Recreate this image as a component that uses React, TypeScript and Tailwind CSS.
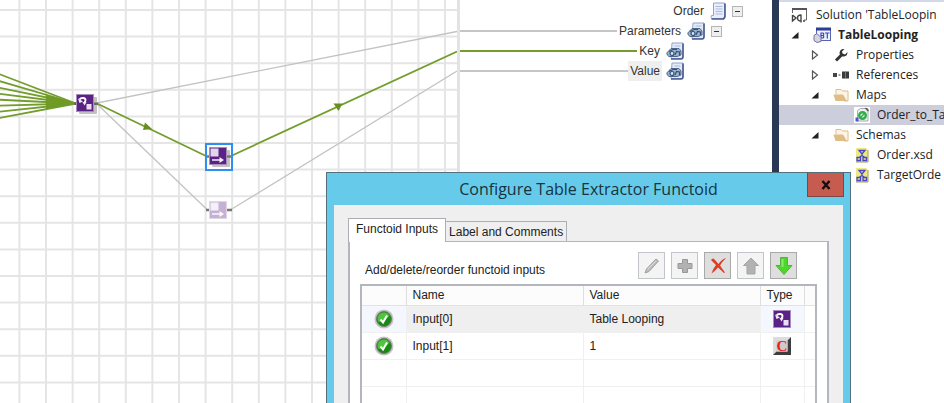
import type { ReactNode } from "react";

const GRID = 26.6;
const gridColumns = Array.from({ length: 60 }, (_, i) => 19.4 + i * GRID);
const gridRows = Array.from({ length: 40 }, (_, i) => 10 + i * GRID);
const incomingLinks = [74, 81, 87.7, 93.7, 99.7, 105.7, 111.7, 118];

function LoopingGlyph() {
  return (
    <>
      <rect width="18" height="18" fill="#5b2285" />
      <rect x="0.5" y="0.5" width="17" height="17" fill="none" stroke="#a78bbd" />
      <path
        d="M3.5 5.500Q5 3.500 7.500 4q2.500.7 1.800 3-.6 1.800-1.300 2.500"
        fill="none"
        stroke="#fff"
        strokeWidth="2"
      />
      <path d="M2 4.500l1.500 4.500 3.500-1.500zM6.500 8h4l-2 3.500z" fill="#f3ecf8" />
      <rect x="10.500" y="10" width="5" height="5.500" fill="#e9def2" />
    </>
  );
}

function ExtractorGlyph() {
  return (
    <>
      <rect width="18" height="18" fill="#5b2285" />
      <rect x="0.5" y="0.5" width="17" height="17" fill="none" stroke="#a78bbd" />
      <rect x="1.500" y="1.500" width="8" height="8" fill="#e2d6ec" />
      <path d="M3 12.200h7.500V10l4.500 3-4.500 3v-2.200H3z" fill="#f4eef8" />
    </>
  );
}

function MapCanvas() {
  return (
    <main className="min-w-0 flex-1 border-r-[3px] border-[#e3e3e3] bg-white">
      <svg className="block h-full w-full" role="img" aria-label="Map grid">
        <g stroke="#e5e5e5" strokeWidth="2">
          {gridColumns.map((x) => (
            <line key={x} x1={x} x2={x} y1="0" y2="100%" />
          ))}
          {gridRows.map((y) => (
            <line key={y} x1="0" x2="100%" y1={y} y2={y} />
          ))}
        </g>

        <g stroke="#c3c3c3" strokeWidth="1.300" fill="none">
          <path d="M97 103L457 31.500" />
          <path d="M97 104L207 209.500" />
          <path d="M231 209.500L457 71" />
        </g>

        <g stroke="#739d2c" strokeWidth="1.800" fill="none">
          {incomingLinks.map((y) => (
            <path key={y} d={`M-1 ${y}L76 103.500`} />
          ))}
          <path d="M96 103L206 156" />
          <path d="M231 156L457 51.500" />
        </g>
        <path d="M46 95L76 103.500L46 109z" fill="#6f9a25" />
        <path d="M145 122.500l7 6.500l-9 1z" fill="#668f1e" />
        <path d="M333.500 103.500l9 0l-4 7.500z" fill="#668f1e" />

        <rect x="79" y="97" width="18" height="17" rx="1" fill="#c4c0bd" />
        <rect x="74.500" y="102.500" width="3" height="2.500" fill="#5a5a5a" />
        <rect x="94" y="102.500" width="4" height="2.500" fill="#6a6a6a" />
        <g transform="translate(76 94)">
          <LoopingGlyph />
        </g>

        <rect x="206" y="144" width="26" height="26" fill="#fff" stroke="#2e8ff0" strokeWidth="2" />
        <rect x="212" y="150" width="18" height="17" rx="1" fill="#c4c0bd" />
        <path d="M207 156.500h3M227 156.500h4" stroke="#777" strokeWidth="2.500" />
        <g transform="translate(209 147)">
          <ExtractorGlyph />
        </g>

        <path d="M206 210h4M227 210h5" stroke="#777" strokeWidth="2.500" />
        <rect x="209" y="201" width="18" height="18" fill="#fff" />
        <g transform="translate(209 201)" opacity="0.350">
          <ExtractorGlyph />
        </g>
      </svg>
    </main>
  );
}

function RecordIcon() {
  return (
    <svg viewBox="0 0 16 18" className="h-[18px] w-4 shrink-0" aria-hidden="true">
      <path d="M3.500 1h11v13q0 2.500-2 2.500H1.500q-1-1 0-3h2z" fill="#e9effa" stroke="#93a3c9" />
      <path d="M15 1.500v13q-.5 2.500-2.500 2.500H1.500" fill="none" stroke="#4b5a92" strokeWidth="1.600" />
      <path d="M5.500 4.500h7M5.500 7h7M5.500 9.500h7M5.500 12h7" stroke="#a9bade" />
    </svg>
  );
}

function FieldIcon() {
  return (
    <svg viewBox="0 0 18 18" className="size-[18px] shrink-0" aria-hidden="true">
      <path d="M6 1h11v14q-1 2-3 1.500H5z" fill="#e3ebf8" stroke="#93a3c9" />
      <path d="M17 1.500v13q0 2.500-2 2.500H5" fill="none" stroke="#4b5a92" strokeWidth="1.600" />
      <path d="M8.500 4h6" stroke="#a9bade" />
      <path d="M.8 11L5 6.500h8l2 2.500v4l-4 1.500H3q-2.200-1-2.200-3.500z" fill="#9db4cb" stroke="#4d668c" />
      <circle cx="6" cy="11.500" r="2" fill="#d7e6f2" stroke="#34507a" strokeWidth="1.200" />
      <path d="M9 13l1.500-3.500 3 .5v3M3 9.500L7 7.500h4" fill="none" stroke="#34507a" strokeWidth="1.200" />
    </svg>
  );
}

function CollapseButton({ label }: { label: string }) {
  return (
    <button
      aria-label={`Collapse ${label}`}
      className="flex size-[11px] shrink-0 items-center justify-center border border-[#b5b5b5] bg-[#efefef]"
    >
      <span className="h-px w-[5px] bg-[#333]" />
    </button>
  );
}

type SchemaRowProps = {
  label: string;
  indent: string;
  line?: string;
  highlighted?: boolean;
  record?: boolean;
  collapsible?: boolean;
};

const schemaRows: SchemaRowProps[] = [
  { label: "Order", indent: "pr-[29px]", record: true, collapsible: true },
  { label: "Parameters", indent: "pr-[50px]", line: "bg-[#c6c6c6]", collapsible: true },
  { label: "Key", indent: "pr-[88px]", line: "bg-[#739d2c]" },
  { label: "Value", indent: "pr-[88px]", line: "bg-[#c6c6c6]", highlighted: true },
];

function SchemaRow({ label, indent, line, highlighted, record, collapsible }: SchemaRowProps) {
  return (
    <li className={`flex h-5 items-center ${indent}`}>
      <span className={`h-[2px] flex-1 ${line ?? ""}`} />
      <span className={`px-[2px] leading-5 ${highlighted ? "bg-[#efefef]" : ""}`}>{label}</span>
      <span className="ml-1 flex items-center gap-[6px]">
        {record ? <RecordIcon /> : <FieldIcon />}
        {collapsible && <CollapseButton label={label} />}
      </span>
    </li>
  );
}

function SchemaTree() {
  return (
    <section className="w-[312px] shrink-0 bg-white pt-px font-['Liberation_Sans',Arial,sans-serif] text-[12px] text-[#333]">
      <ul>
        {schemaRows.map((row) => (
          <SchemaRow key={row.label} {...row} />
        ))}
      </ul>
    </section>
  );
}

function SolutionIcon() {
  return (
    <svg viewBox="0 0 18 16" className="h-4 w-[18px]" aria-hidden="true">
      <path d="M1.500 6V2.500h14V13H13" fill="none" stroke="#666" />
      <path d="M1 2h15" stroke="#555" strokeWidth="2" />
      <path d="M1.500 8v6l3.500-3-3.500-3M10 8q-3.500 0-3.500 3T10 14M10 7.500V15.500" fill="none" stroke="#444" strokeWidth="1.400" />
      <path d="M12 14h2" stroke="#444" strokeWidth="1.500" />
    </svg>
  );
}

function ProjectIcon() {
  return (
    <svg viewBox="0 0 18 16" className="h-4 w-[18px]" aria-hidden="true">
      <rect x="3.500" y="1.500" width="14" height="12" fill="#f0f2fb" stroke="#5a63b0" />
      <path d="M3 2h15" stroke="#2f3c96" strokeWidth="3" />
      <path d="M8 6v5h2q1.500-1.200 0-2.500H8h2Q11.500 7 10 6zM12 6h4.500M14.300 6v5.500" fill="none" stroke="#3549b8" strokeWidth="1.200" />
      <path d="M1 8.500l3-2 4 4v4l-4 1-3-2z" fill="#d5d3e6" stroke="#77719c" />
    </svg>
  );
}

function WrenchIcon() {
  return (
    <svg viewBox="0 0 16 16" className="size-4" aria-hidden="true">
      <path d="M3 13.500L9 7.500" stroke="#333" strokeWidth="3" />
      <path d="M11.500 2Q7 1.500 6.500 6q.5 4 4.500 3.500 3.500-.5 3.500-4.500L12 7.500 9.500 6.500 9 4.500z" fill="#333" />
    </svg>
  );
}

function ReferencesIcon() {
  return (
    <svg viewBox="0 0 16 16" className="size-4" aria-hidden="true">
      <rect y="6" width="4" height="4" fill="#444" />
      <path d="M5.500 8h2" stroke="#777" strokeWidth="1.500" />
      <rect x="9" y="4.500" width="7" height="7" fill="#3a3a3a" />
      <path d="M12.500 4.500v7" stroke="#888" strokeWidth=".8" />
    </svg>
  );
}

function FolderIcon() {
  return (
    <svg viewBox="0 0 16 16" className="size-4" aria-hidden="true">
      <path d="M3 7V2.500h5l1.500 1.500h5.500v10h-4" fill="#fdf4e6" stroke="#e0bd87" />
      <path d="M.5 7.500h9.500L14 14H2.500z" fill="#e0bd87" />
    </svg>
  );
}

function MapFileIcon() {
  return (
    <svg viewBox="0 0 16 16" className="size-4 bg-white" aria-hidden="true">
      <path d="M3.500 3.500l3-2h7.500v12.500H3.500z" fill="#eef1f4" stroke="#aaa" />
      <circle cx="8.500" cy="8.500" r="3.300" fill="none" stroke="#2fae49" strokeWidth="2.400" />
      <path d="M6 11L11 6" stroke="#2fae49" strokeWidth="1.500" />
      <path d="M1.500 10.500h3v4h-3z" fill="#4a56cf" />
      <path d="M11.500 1l3 3" stroke="#555" strokeWidth="1.500" />
    </svg>
  );
}

function SchemaFileIcon() {
  return (
    <svg viewBox="0 0 16 16" className="size-4" aria-hidden="true">
      <path d="M2 1h10l2 2v12H2z" fill="#f1e77c" />
      <path d="M14 3v12H2" fill="none" stroke="#a59c4b" />
      <path d="M5 3.500h6L8 7zM3 10.500h3.500v3H3zM9 10.500h3.500v3H9zM8 6.500v3M5 10.500L8 8.500l3 2" fill="none" stroke="#4148cf" strokeWidth="1.300" />
    </svg>
  );
}

type ExplorerRow = {
  label: string;
  indent: string;
  icon: ReactNode;
  expander?: "open" | "closed";
  bold?: boolean;
  selected?: boolean;
};

const explorerRows: ExplorerRow[] = [
  { label: "Solution 'TableLoopin", indent: "pl-3", icon: <SolutionIcon /> },
  { label: "TableLooping", indent: "pl-3", icon: <ProjectIcon />, expander: "open", bold: true },
  { label: "Properties", indent: "pl-8", icon: <WrenchIcon />, expander: "closed" },
  { label: "References", indent: "pl-8", icon: <ReferencesIcon />, expander: "closed" },
  { label: "Maps", indent: "pl-8", icon: <FolderIcon />, expander: "open" },
  { label: "Order_to_Ta", indent: "pl-[75px]", icon: <MapFileIcon />, selected: true },
  { label: "Schemas", indent: "pl-8", icon: <FolderIcon />, expander: "open" },
  { label: "Order.xsd", indent: "pl-[75px]", icon: <SchemaFileIcon /> },
  { label: "TargetOrde", indent: "pl-[75px]", icon: <SchemaFileIcon /> },
];

function Expander({ label, open }: { label: string; open: boolean }) {
  return (
    <button aria-label={`Toggle ${label}`} aria-expanded={open} className="mr-[14px] w-2 shrink-0">
      <svg viewBox="0 0 8 10" className="h-[10px] w-2" aria-hidden="true">
        {open ? (
          <path d="M7.500 2v6.500H0.500z" fill="#222" />
        ) : (
          <path d="M1.500 1l5 4-5 4z" fill="#fff" stroke="#555" strokeWidth="1.200" />
        )}
      </svg>
    </button>
  );
}

function SolutionExplorer() {
  return (
    <aside className="w-[172px] shrink-0 overflow-hidden border-l-[7px] border-[#293955] bg-white font-['Open_Sans','Noto_Sans',sans-serif] text-[12px] text-[#222]">
      <div className="mb-[3px] h-[2px] bg-[#d3d9e8]" />
      <ul>
        {explorerRows.map((row) => (
          <li
            key={row.label}
            className={`flex h-5 items-center whitespace-nowrap ${row.indent} ${row.selected ? "bg-[#cccedb]" : ""}`}
          >
            {row.expander && <Expander label={row.label} open={row.expander === "open"} />}
            <span className="mr-[7px] shrink-0">{row.icon}</span>
            <span className={row.bold ? "font-bold" : ""}>{row.label}</span>
          </li>
        ))}
      </ul>
    </aside>
  );
}

type ToolButtonProps = {
  label: string;
  enabled?: boolean;
  children: ReactNode;
};

function ToolButton({ label, enabled, children }: ToolButtonProps) {
  return (
    <button
      aria-label={label}
      disabled={!enabled}
      className={`flex size-[27px] items-center justify-center border ${
        enabled ? "border-[#a9a9a9] bg-[#dedede]" : "border-[#c2c5c9] bg-[#f4f4f4]"
      }`}
    >
      <svg viewBox="0 0 20 20" className="size-5" aria-hidden="true">
        {children}
      </svg>
    </button>
  );
}

function Toolbar() {
  return (
    <div className="flex gap-[6px]">
      <ToolButton label="Edit input">
        <path d="M3 17l1.500-4L14 3l2.500 2L7 15.500z" fill="#bcbcbc" stroke="#a2a2a2" />
        <path d="M5.500 13.500L14 5" stroke="#dedede" />
      </ToolButton>
      <ToolButton label="Add input">
        <path d="M7.500 3.500h5v4H17v5h-4.500v4h-5v-4H3v-5h4.500z" fill="#b2b2b2" stroke="#989898" strokeLinejoin="round" />
      </ToolButton>
      <ToolButton label="Delete input" enabled>
        <path d="M3 4q2-3 4 0l3.500 4Q14 3 18 2q-4 4-6 7.500l5 7-1 .5-6-5.500Q6 16 3.500 17.500 5 12.500 8 9z" fill="#df3c24" />
      </ToolButton>
      <ToolButton label="Move input up">
        <path d="M10 2L17.500 9.500H14v8.500H6V9.500H2.500z" fill="#b2b2b2" stroke="#a5a5a5" strokeLinejoin="round" />
      </ToolButton>
      <ToolButton label="Move input down" enabled>
        <path d="M6.500 1.500h7v8h4.500L10 18.500 2 9.500h4.500z" fill="#4fd62c" stroke="#56b03e" strokeLinejoin="round" />
        <path d="M8.500 3v8" stroke="#86ef63" strokeWidth="2" />
      </ToolButton>
    </div>
  );
}

function ValidIcon() {
  return (
    <svg viewBox="0 0 20 20" className="mx-auto size-5" role="img" aria-label="Valid">
      <circle cx="10" cy="10" r="9.500" fill="#c2c2c2" />
      <circle cx="10" cy="10" r="7.500" fill="#188a14" stroke="#777" />
      <path d="M3.500 10a6.500 6.500 0 0 1 12-3.500Q12 12 4.500 13z" fill="#4fc43c" />
      <path d="M6.500 10.500l2.500 3 4-7" fill="none" stroke="#fff" strokeWidth="2" />
    </svg>
  );
}

function LoopingIcon() {
  return (
    <svg viewBox="0 0 18 18" className="mx-auto size-[18px]" role="img" aria-label="Functoid">
      <LoopingGlyph />
    </svg>
  );
}

function ConstantIcon() {
  return (
    <svg viewBox="0 0 18 18" className="mx-auto size-[18px]" role="img" aria-label="Constant">
      <rect width="18" height="18" fill="#dcdcdc" />
      <path d="M18 0v18H0l3.500-3.500h11v-11z" fill="#3d3d3d" />
      <rect x="3.500" y="3.500" width="11" height="11" fill="#cbcbcb" />
      <text
        x="9"
        y="14"
        textAnchor="middle"
        fill="#f01c1c"
        className="font-['Liberation_Serif',serif] text-[15px] font-bold"
      >
        C
      </text>
    </svg>
  );
}

const inputs = [
  { name: "Input[0]", value: "Table Looping", icon: <LoopingIcon />, selected: true },
  { name: "Input[1]", value: "1", icon: <ConstantIcon />, selected: false },
];

function InputsTable() {
  return (
    <div className="flex-1 overflow-hidden border-2 border-b-0 border-[#b4b6bd] bg-white">
      <table className="w-full table-fixed border-collapse text-left">
        <colgroup>
          <col className="w-11" />
          <col />
          <col />
          <col className="w-11" />
          <col className="w-[11px]" />
        </colgroup>
        <thead>
          <tr className="h-[19px] border-b border-[#e2e2e2] bg-[#fcfcfc] leading-[18px]">
            <th className="border-r border-[#dedede]" aria-label="Status" />
            <th className="border-r border-[#dedede] pl-[6px] font-normal">Name</th>
            <th className="border-r border-[#dedede] pl-[6px] font-normal">Value</th>
            <th className="border-r border-[#dedede] pl-[6px] font-normal">Type</th>
            <td />
          </tr>
        </thead>
        <tbody>
          {inputs.map((input) => (
            <tr key={input.name} className={`h-[27px] border-b border-[#f0f0f0] ${input.selected ? "bg-[#efefef]" : ""}`}>
              <td className={`border-r border-[#f0f0f0] ${input.selected ? "bg-[#f4f8fe]" : ""}`}>
                <ValidIcon />
              </td>
              <td className="border-r border-[#f0f0f0] pl-[6px]">{input.name}</td>
              <td className="border-r border-[#f0f0f0] pl-[6px]">{input.value}</td>
              <td className={`border-r border-[#f0f0f0] ${input.selected ? "bg-[#f4f8fe]" : ""}`}>{input.icon}</td>
              <td className="bg-white" />
            </tr>
          ))}
          {[0, 1, 2].map((i) => (
            <tr key={i} className="h-[27px] border-b border-[#f0f0f0]">
              <td className="border-r border-[#f0f0f0]" />
              <td className="border-r border-[#f0f0f0]" />
              <td className="border-r border-[#f0f0f0]" />
              <td className="border-r border-[#f0f0f0]" />
              <td />
            </tr>
          ))}
        </tbody>
      </table>
    </div>
  );
}

function FunctoidDialog() {
  return (
    <div
      role="dialog"
      aria-labelledby="dialog-title"
      className="absolute top-[172px] bottom-0 left-[326px] flex w-[525px] flex-col border border-b-0 border-[#55707d] bg-[#66cbea] font-['Liberation_Sans',Arial,sans-serif] text-[12px] text-[#222]"
    >
      <header className="relative flex h-8 shrink-0 items-center justify-center">
        <h1 id="dialog-title" className="font-['Open_Sans','Noto_Sans',sans-serif] text-[16px] text-[#17333f]">
          Configure Table Extractor Functoid
        </h1>
        <button
          aria-label="Close"
          className="absolute top-0 right-[6px] flex h-6 w-[37px] items-center justify-center border border-t-0 border-[#7f4543] bg-[#c65b50]"
        >
          <svg viewBox="0 0 10 10" className="size-[10px]" aria-hidden="true">
            <path d="M1.500 1L8.500 9M8.500 1L1.500 9" stroke="#111" strokeWidth="2.400" />
          </svg>
        </button>
      </header>
      <div className="mx-[7px] flex min-h-0 flex-1 flex-col bg-[#efefef] px-[14px] pt-[13px]">
        <div role="tablist" className="flex items-end">
          <button
            role="tab"
            aria-selected="true"
            className="relative -mb-px h-6 border border-b-0 border-[#acaeb5] bg-white px-[7px] pb-1"
          >
            Functoid Inputs
          </button>
          <button role="tab" aria-selected="false" className="h-5 border border-b-0 border-l-0 border-[#acaeb5] px-[3px]">
            Label and Comments
          </button>
        </div>
        <div role="tabpanel" className="flex min-h-0 flex-1 flex-col border-x-2 border-t border-[#b4b6bd] bg-white px-[10px] pt-[10px]">
          <div className="mb-[5px] flex items-center justify-between pr-5 pl-[5px]">
            <p className="pt-2">Add/delete/reorder functoid inputs</p>
            <Toolbar />
          </div>
          <InputsTable />
        </div>
      </div>
    </div>
  );
}

export default function App() {
  return (
    <div className="relative flex h-screen overflow-hidden bg-white">
      <MapCanvas />
      <SchemaTree />
      <SolutionExplorer />
      <FunctoidDialog />
    </div>
  );
}
